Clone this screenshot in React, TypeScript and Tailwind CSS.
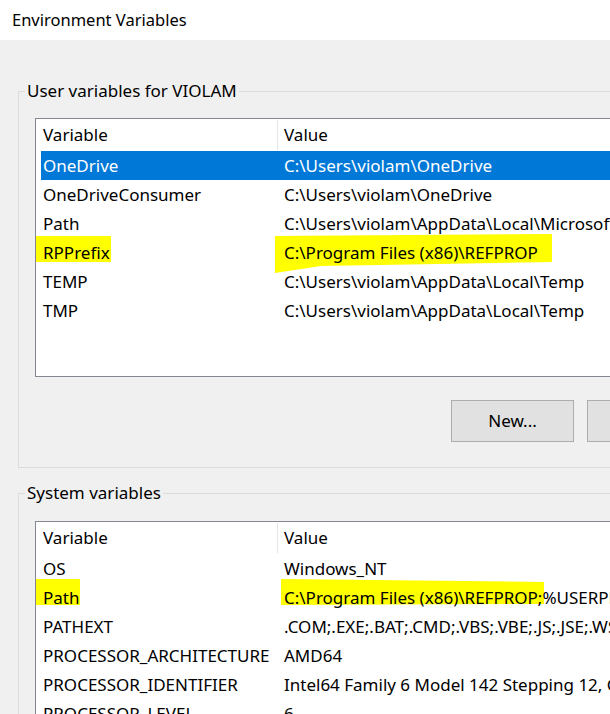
import React from "react";

type Row = {
  name: string;
  value: string;
  selected?: boolean;
  markName?: string;
  markValue?: string;
};

const USER_VARS: Row[] = [
  { name: "OneDrive", value: "C:\\Users\\violam\\OneDrive", selected: true },
  { name: "OneDriveConsumer", value: "C:\\Users\\violam\\OneDrive" },
  { name: "Path", value: "C:\\Users\\violam\\AppData\\Local\\Microsoft\\WindowsApps;" },
  {
    name: "RPPrefix",
    value: "C:\\Program Files (x86)\\REFPROP",
    markName: "left-[-6px] top-[-2px] w-[76px] h-[26px]",
    markValue:
      "left-[-3px] top-[-4px] w-[277px] h-[39px] [clip-path:polygon(0_2px,100%_0,100%_28px,46px_32px,0_100%)]",
  },
  { name: "TEMP", value: "C:\\Users\\violam\\AppData\\Local\\Temp" },
  { name: "TMP", value: "C:\\Users\\violam\\AppData\\Local\\Temp" },
];

const SYSTEM_VARS: Row[] = [
  { name: "OS", value: "Windows_NT" },
  {
    name: "Path",
    value: "C:\\Program Files (x86)\\REFPROP;%USERPROFILE%\\AppData\\Local\\Microsoft\\WindowsApps",
    markName: "left-[-5px] top-[-4px] w-[44px] h-[26px]",
    markValue: "left-[3px] top-[-4px] w-[263px] h-[26px] [clip-path:polygon(0_0,100%_3px,100%_96%,0_100%)]",
  },
  { name: "PATHEXT", value: ".COM;.EXE;.BAT;.CMD;.VBS;.VBE;.JS;.JSE;.WSF;.WSH;.MSC" },
  { name: "PROCESSOR_ARCHITECTURE", value: "AMD64" },
  { name: "PROCESSOR_IDENTIFIER", value: "Intel64 Family 6 Model 142 Stepping 12, GenuineIntel" },
  { name: "PROCESSOR_LEVEL", value: "6" },
  { name: "PROCESSOR_REVISION", value: "8e0c" },
];

export default function App() {
  return (
    <div className="w-[610px] h-[714px] overflow-hidden bg-[#f0f0f0] font-['Noto_Sans',Arial,sans-serif] text-[17px] text-black">
      <div className="h-[40px] bg-white flex items-center pl-[12px] text-[16.5px]">
        Environment Variables
      </div>

      <div className="w-[900px] px-[18px]">
        <GroupBox label="User variables for VIOLAM" className="mt-[40px] pb-[25px]" listGap="mt-[16px]">
          <VarList rows={USER_VARS} />
          <div className="flex gap-[13px] mt-[23px] ml-[416px]">
            <Button>New...</Button>
            <Button>Edit...</Button>
            <Button>Delete</Button>
          </div>
        </GroupBox>

        <GroupBox label="System variables" className="mt-[14px] pb-[25px]" listGap="mt-[17px]">
          <VarList rows={SYSTEM_VARS} />
        </GroupBox>
      </div>
    </div>
  );
}

function GroupBox({
  label,
  className,
  listGap,
  children,
}: {
  label: string;
  className?: string;
  listGap: string;
  children: React.ReactNode;
}) {
  return (
    <fieldset className={`border border-[#dcdcdc] pl-[6px] pr-[16px] ${className ?? ""}`}>
      <legend className="px-[2px] leading-[22px]">{label}</legend>
      <div className={`ml-[10px] ${listGap}`}>{children}</div>
    </fieldset>
  );
}

function VarList({ rows }: { rows: Row[] }) {
  return (
    <div className="h-[259px] border border-[#828790] bg-white overflow-hidden">
      {/* header */}
      <div className="flex h-[32px] items-center ml-[5px]">
        <div className="w-[237px] h-[30px] flex items-center pl-[2px] border-r border-[#e5e5e5]">
          Variable
        </div>
        <div className="pl-[6px]">Value</div>
      </div>
      {rows.map((r) => (
        <div
          key={r.name}
          className={`flex h-[29px] leading-[29px] ml-[5px] whitespace-nowrap ${
            r.selected ? "bg-[#0078d7] text-white" : ""
          }`}
        >
          <div className="relative w-[237px] shrink-0 pl-[2px]">
            {r.markName && <div className={`absolute bg-[#ffff00] ${r.markName}`} />}
            <span className="relative">{r.name}</span>
          </div>
          <div className="relative pl-[6px]">
            {r.markValue && <div className={`absolute bg-[#ffff00] ${r.markValue}`} />}
            <span className="relative">{r.value}</span>
          </div>
        </div>
      ))}
    </div>
  );
}

function Button({ children }: { children: React.ReactNode }) {
  return (
    <button className="w-[123px] h-[42px] bg-[#e1e1e1] border border-[#adadad] text-[17px]">
      {children}
    </button>
  );
}
